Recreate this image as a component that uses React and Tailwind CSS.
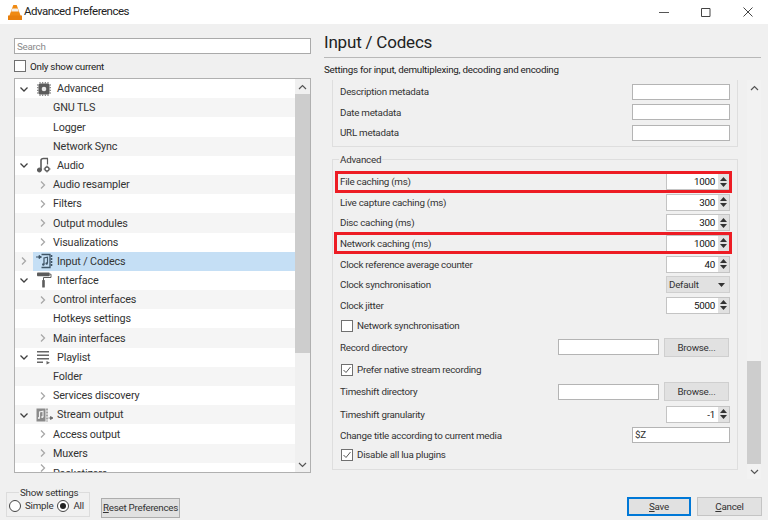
const Chevron = ({ open, light }) => (
  <svg width="10" height="10" viewBox="0 0 10 10" fill="none" stroke={light ? '#a8a8a8' : '#404040'} strokeWidth="1.3">
    {open ? <path d="M1.5 3.5 5 7l3.5-3.5" /> : <path d="M3 1.5 6.5 5 3 8.5" />}
  </svg>
);

const Cone = () => (
  <svg width="16" height="16" viewBox="0 0 16 16">
    <path d="M6.3 1h3.4l4 11H2.3z" fill="#f08a12" />
    <path d="M5.3 4.5h5.4l1 3H4.2z" fill="#f4f0ea" />
    <path d="M1 11.5h14V16H1z" fill="#e87f0c" />
  </svg>
);

const IconAdvanced = () => (
  <svg width="16" height="16" viewBox="0 0 16 16">
    <rect x="2.5" y="2.5" width="11" height="11" rx="1.5" fill="#5c5c5c" />
    <circle cx="8" cy="8" r="2.3" fill="#e8e8e8" />
    <path d="M4 1v14M6.7 1v14M9.3 1v14M12 1v14M1 4h14M1 6.7h14M1 9.3h14M1 12h14" stroke="#5c5c5c" strokeWidth="1" strokeDasharray="1.5 11" strokeOpacity="0.9" />
  </svg>
);
const IconAudio = () => (
  <svg width="16" height="16" viewBox="0 0 16 16" fill="none" stroke="#5c5c5c">
    <path d="M5 13V3.5C5 2 6 1.5 7.5 1.5H12" strokeWidth="1.6" />
    <circle cx="3.4" cy="13" r="2" fill="#5c5c5c" />
    <path d="M11.5 1.5v6" strokeWidth="1.2" />
    <circle cx="11" cy="12" r="2" strokeWidth="1.3" />
    <path d="M11 8.5v1.5M11 14v1.5M7.6 12H9M13 12h1.5" strokeWidth="1" />
  </svg>
);
const IconInput = () => (
  <svg width="18" height="16" viewBox="0 0 18 16">
    <path d="M0 4h4M3 2.5 5.5 4 3 5.5z" stroke="#3f5566" fill="#3f5566" strokeWidth="1" />
    <path d="M5.5 1.5h8.5v13H5.5" fill="none" stroke="#3f5566" strokeWidth="1.3" />
    <path d="M8 11.5V5l3.5-.8V10" fill="none" stroke="#3f5566" strokeWidth="1.2" />
    <circle cx="7.3" cy="11.5" r="1.2" fill="#3f5566" />
    <circle cx="10.7" cy="10.5" r="1.2" fill="#3f5566" />
    <path d="M15.5 2v12" stroke="#3f5566" strokeWidth="1.6" strokeDasharray="2 1" />
  </svg>
);
const IconInterface = () => (
  <svg width="16" height="16" viewBox="0 0 16 16">
    <path d="M1 1.5C1 1 1.5 .5 2 .5h10.5c.8 0 1.2.5 1.2 1v1.8c0 .6-.4 1-1.2 1H2c-.5 0-1-.5-1-1z" fill="#5c5c5c" />
    <path d="M13.7 2.2h1.3v3.3H7.5V8" fill="none" stroke="#5c5c5c" strokeWidth="1" />
    <rect x="6.2" y="8" width="2.6" height="7.5" rx=".6" fill="#5c5c5c" />
  </svg>
);
const IconPlaylist = () => (
  <svg width="16" height="16" viewBox="0 0 16 16" fill="#666">
    <path d="M1 2h12v1.4H1zM1 5.5h12v1.4H1zM1 9h12v1.4H1zM1 12.5h6v1.4H1z" />
    <path d="M10.5 12l3.5 1.8-3.5 1.8z" />
  </svg>
);
const IconStream = () => (
  <svg width="18" height="16" viewBox="0 0 18 16">
    <path d="M.5 1.5h9v13h-9z" fill="#8a8a8a" />
    <path d="M3.5 11V5l3.5-.8V10" fill="none" stroke="#eee" strokeWidth="1.1" />
    <circle cx="2.9" cy="11" r="1.1" fill="#eee" />
    <circle cx="6.3" cy="10" r="1.1" fill="#eee" />
    <path d="M11 1.5v13" stroke="#8a8a8a" strokeWidth="1.5" strokeDasharray="2 1" />
    <path d="M12.5 11h3M14.5 9.5 17 11l-2.5 1.5z" stroke="#666" fill="#666" strokeWidth=".8" />
  </svg>
);

const tree = [
  { l: 'Advanced', top: 1, icon: <IconAdvanced />, open: true },
  { l: 'GNU TLS' },
  { l: 'Logger' },
  { l: 'Network Sync' },
  { l: 'Audio', top: 1, icon: <IconAudio />, open: true },
  { l: 'Audio resampler', c: 1 },
  { l: 'Filters', c: 1 },
  { l: 'Output modules', c: 1 },
  { l: 'Visualizations', c: 1 },
  { l: 'Input / Codecs', top: 1, icon: <IconInput />, selected: true },
  { l: 'Interface', top: 1, icon: <IconInterface />, open: true },
  { l: 'Control interfaces', c: 1 },
  { l: 'Hotkeys settings' },
  { l: 'Main interfaces', c: 1 },
  { l: 'Playlist', top: 1, icon: <IconPlaylist />, open: true },
  { l: 'Folder' },
  { l: 'Services discovery', c: 1 },
  { l: 'Stream output', top: 1, icon: <IconStream />, open: true },
  { l: 'Access output', c: 1 },
  { l: 'Muxers', c: 1 },
];

const TreeRow = ({ r, i }) => (
  <div className={`h-[19.2px] shrink-0 flex items-center ${i % 2 ? 'bg-[#f5f5f5]' : 'bg-white'}`}>
    {r.top ? (
      <>
        <span className="w-[18px] pl-[4px] flex shrink-0"><Chevron open={r.open} light={!r.open} /></span>
        <span className={`h-full flex items-center flex-1 pl-[2px] ${r.selected ? 'bg-[#c5dff5]' : ''}`}>
          <span className="w-[21px] shrink-0 pl-[1px] flex">{r.icon}</span>
          <span className="pl-[1px] pt-[2px]">{r.l}</span>
        </span>
      </>
    ) : (
      <>
        <span className="w-[38px] pl-[23px] shrink-0 flex">{r.c ? <Chevron light /> : null}</span>
        <span className="pt-[2px]">{r.l}</span>
      </>
    )}
  </div>
);

const Box = ({ checked }) => (
  <span className="w-[12px] h-[12px] border border-[#707070] bg-white shrink-0 flex items-center justify-center">
    {checked ? (
      <svg width="10" height="10" viewBox="0 0 10 10" fill="none" stroke="#555" strokeWidth="1"><path d="M1.5 5 4 7.5 8.5 2" /></svg>
    ) : null}
  </span>
);

const Input = ({ children, className = '' }) => (
  <div className={`h-[16px] border border-[#b4b4b4] bg-white flex items-center px-[2px] ${className}`}>{children}</div>
);

const Spin = ({ v }) => (
  <div className="w-[64px] h-[17px] flex bg-[#e1e1e1] border border-[#c4c4c4] shrink-0">
    <div className="flex-1 bg-white flex items-center justify-end pr-[3px] pt-[1px] text-[#111]">{v}</div>
    <div className="w-[11px] flex flex-col items-center justify-center gap-[2px]">
      <svg width="7" height="4" viewBox="0 0 7 4"><path d="M3.5 0 7 4H0z" fill="#333" /></svg>
      <svg width="7" height="4" viewBox="0 0 7 4"><path d="M0 0h7L3.5 4z" fill="#333" /></svg>
    </div>
  </div>
);

const Browse = () => (
  <button className="w-[65px] h-[19px] bg-[#e1e1e1] border border-[#cfcfcf] flex items-center justify-center pt-[1px] text-[#333] ml-[5px] mr-[1px]">Browse...</button>
);

const Row = ({ h, label, children }) => (
  <div className="flex items-center justify-between pl-[7px] pr-[7px] shrink-0" style={{ height: h }}>
    <span className="pt-[1px]">{label}</span>
    {children}
  </div>
);

const CheckRow = ({ h, label, checked }) => (
  <div className="flex items-center gap-[4px] pl-[8px] shrink-0" style={{ height: h }}>
    <Box checked={checked} />
    <span className="pt-[1px]">{label}</span>
  </div>
);

const ScrollArrow = ({ up }) => (
  <div className="h-[15px] flex items-center justify-center shrink-0">
    <svg width="9" height="6" viewBox="0 0 9 6" fill="none" stroke="#555" strokeWidth="1.2">
      <path d={up ? 'M1 5l3.5-3.5L8 5' : 'M1 1l3.5 3.5L8 1'} />
    </svg>
  </div>
);

const Highlight = ({ className }) => (
  <div className={`absolute border-[3px] border-[#ed1c24] pointer-events-none ${className}`} />
);

export default function App() {
  return (
    <div className="w-[768px] h-[520px] bg-[#f0f0f0] flex flex-col overflow-hidden relative text-[9.8px] tracking-[-0.25px] leading-none text-[#333] whitespace-nowrap font-['Roboto','Liberation_Sans',sans-serif]">
      <div className="h-[24px] bg-white flex items-center shrink-0 pl-[7px] text-[11.5px] tracking-[-0.5px] text-[#222]">
        <Cone />
        <span className="ml-[1px]">Advanced Preferences</span>
        <div className="ml-auto flex items-center text-[#333]">
          <span className="w-[42px] flex justify-center">
            <svg width="10" height="10" viewBox="0 0 10 10" stroke="#555"><path d="M0 5.5h10" /></svg>
          </span>
          <span className="w-[42px] flex justify-center">
            <svg width="10" height="10" viewBox="0 0 10 10" fill="none" stroke="#444"><path d="M.5 1.5h8.5v8H.5z" /></svg>
          </span>
          <span className="w-[42px] flex justify-center mr-[-1px]">
            <svg width="10" height="10" viewBox="0 0 10 10" stroke="#444"><path d="M.5 .5l9 9M9.5 .5l-9 9" /></svg>
          </span>
        </div>
      </div>

      <div className="flex flex-1 min-h-0">
        <div className="w-[324px] shrink-0 pl-[14px] pr-[13px] pt-[14px] flex flex-col">
          <div className="h-[16px] border border-[#aaa] bg-white flex items-center pl-[2px] pt-[1px] text-[#8a8a8a] shrink-0">Search</div>
          <div className="h-[12px] mt-[6px] flex items-center gap-[4px] shrink-0 text-[#222]">
            <Box />
            <span className="pt-[1px]">Only show current</span>
          </div>
          <div className="h-[395px] mt-[6px] border border-[#b0b0b0] bg-white flex shrink-0">
            <div className="flex-1 min-w-0 flex flex-col overflow-hidden text-[10.8px] tracking-[-0.15px]">
              {tree.map((r, i) => <TreeRow key={r.l} r={r} i={i} />)}
              <div className="h-[12px] shrink-0 overflow-hidden flex">
                <span className="w-[38px] pl-[23px] shrink-0 flex"><Chevron light /></span>
                <span className="pt-[6px]">Packetizers</span>
              </div>
            </div>
            <div className="w-[15px] bg-[#f0f0f0] flex flex-col shrink-0">
              <ScrollArrow up />
              <div className="h-[259px] bg-[#cdcdcd] shrink-0" />
              <div className="flex-1" />
              <ScrollArrow />
            </div>
          </div>
          <div className="flex mt-[19px] -ml-[8px] items-end">
            <div className="w-[84px] h-[25px] border border-[#dcdcdc] relative flex items-center pl-[2px] pt-[3px] gap-[4px] text-[#333]">
              <span className="absolute -top-[5px] left-[12px] bg-[#f0f0f0] px-[1px]">Show settings</span>
              <span className="w-[12px] h-[12px] rounded-full border border-[#444] bg-white shrink-0" />
              <span>Simple</span>
              <span className="w-[12px] h-[12px] rounded-full border border-[#444] bg-white shrink-0 flex items-center justify-center">
                <span className="w-[6px] h-[6px] rounded-full bg-[#222]" />
              </span>
              <span>All</span>
            </div>
            <button className="ml-[11px] w-[79px] h-[20px] bg-[#e1e1e1] border border-[#adadad] text-[#333] flex items-center justify-center -mb-[1px]">
              <span className="underline decoration-[#333]">R</span>eset Preferences
            </button>
          </div>
        </div>

        <div className="flex-1 min-w-0 flex flex-col pr-[7px]">
          <h1 className="text-[17px] tracking-[-0.2px] leading-none mt-[10px] h-[22px] font-normal text-[#222] shrink-0">Input / Codecs</h1>
          <div className="h-px bg-[#b8b8b8] mt-[1px] shrink-0" />
          <div className="mt-[6px] mb-[1px] h-[12px] flex items-center shrink-0 text-[#222]">Settings for input, demultiplexing, decoding and encoding</div>
          <div className="h-[399px] mt-[3px] flex shrink-0">
            <div className="flex-1 min-w-0 pl-[8px] pr-[9px] flex flex-col">
              <div className="border border-t-0 border-[#dedede] h-[67px] shrink-0 flex flex-col pt-[1px]">
                <Row h={21} label="Description metadata"><Input className="w-[98px]" /></Row>
                <Row h={20.5} label="Date metadata"><Input className="w-[98px]" /></Row>
                <Row h={20.5} label="URL metadata"><Input className="w-[98px]" /></Row>
              </div>
              <div className="relative border border-[#dedede] mt-[12px] h-[311px] shrink-0 flex flex-col pt-[11.5px]">
                <span className="absolute -top-[5px] left-[6px] bg-[#f0f0f0] px-px">Advanced</span>
                <Row h={20.5} label="File caching (ms)"><Spin v="1000" /></Row>
                <Row h={20.5} label="Live capture caching (ms)"><Spin v="300" /></Row>
                <Row h={20.5} label="Disc caching (ms)"><Spin v="300" /></Row>
                <Row h={20.5} label="Network caching (ms)"><Spin v="1000" /></Row>
                <Row h={21} label="Clock reference average counter"><Spin v="40" /></Row>
                <Row h={20.5} label="Clock synchronisation">
                  <div className="w-[64px] h-[17px] bg-[#e1e1e1] border border-[#cfcfcf] flex items-center justify-between pl-[2px] pr-[4px]">
                    <span className="pt-[1px]">Default</span>
                    <svg width="7" height="4" viewBox="0 0 7 4"><path d="M0 0h7L3.5 4z" fill="#333" /></svg>
                  </div>
                </Row>
                <Row h={20.5} label="Clock jitter"><Spin v="5000" /></Row>
                <CheckRow h={20} label="Network synchronisation" />
                <Row h={23.5} label="Record directory">
                  <div className="flex items-center">
                    <Input className="w-[101px]" />
                    <Browse />
                  </div>
                </Row>
                <CheckRow h={21} label="Prefer native stream recording" checked />
                <Row h={23} label="Timeshift directory">
                  <div className="flex items-center">
                    <Input className="w-[101px]" />
                    <Browse />
                  </div>
                </Row>
                <Row h={22} label="Timeshift granularity"><Spin v="-1" /></Row>
                <Row h={20.5} label="Change title according to current media"><Input className="w-[98px]">$Z</Input></Row>
                <CheckRow h={18} label="Disable all lua plugins" checked />
              </div>
            </div>
            <div className="w-[14px] bg-[#f2f2f2] flex flex-col shrink-0">
              <ScrollArrow up />
              <div className="h-[266px] shrink-0" />
              <div className="h-[103px] bg-[#cdcdcd] shrink-0" />
              <ScrollArrow />
            </div>
          </div>
          <div className="flex justify-end gap-[6px] mt-[18px] text-[#333] shrink-0 -mr-px">
            <button className="w-[64px] h-[19px] bg-[#e1e1e1] border-2 border-[#0078d7] flex items-center justify-center"><span className="underline">S</span>ave</button>
            <button className="w-[65px] h-[19px] bg-[#e1e1e1] border border-[#c4c4c4] flex items-center justify-center"><span className="underline">C</span>ancel</button>
          </div>
        </div>
      </div>

      <Highlight className="left-[335px] top-[171px] w-[397px] h-[22px]" />
      <Highlight className="left-[334px] top-[232px] w-[398px] h-[22px]" />
    </div>
  );
}
